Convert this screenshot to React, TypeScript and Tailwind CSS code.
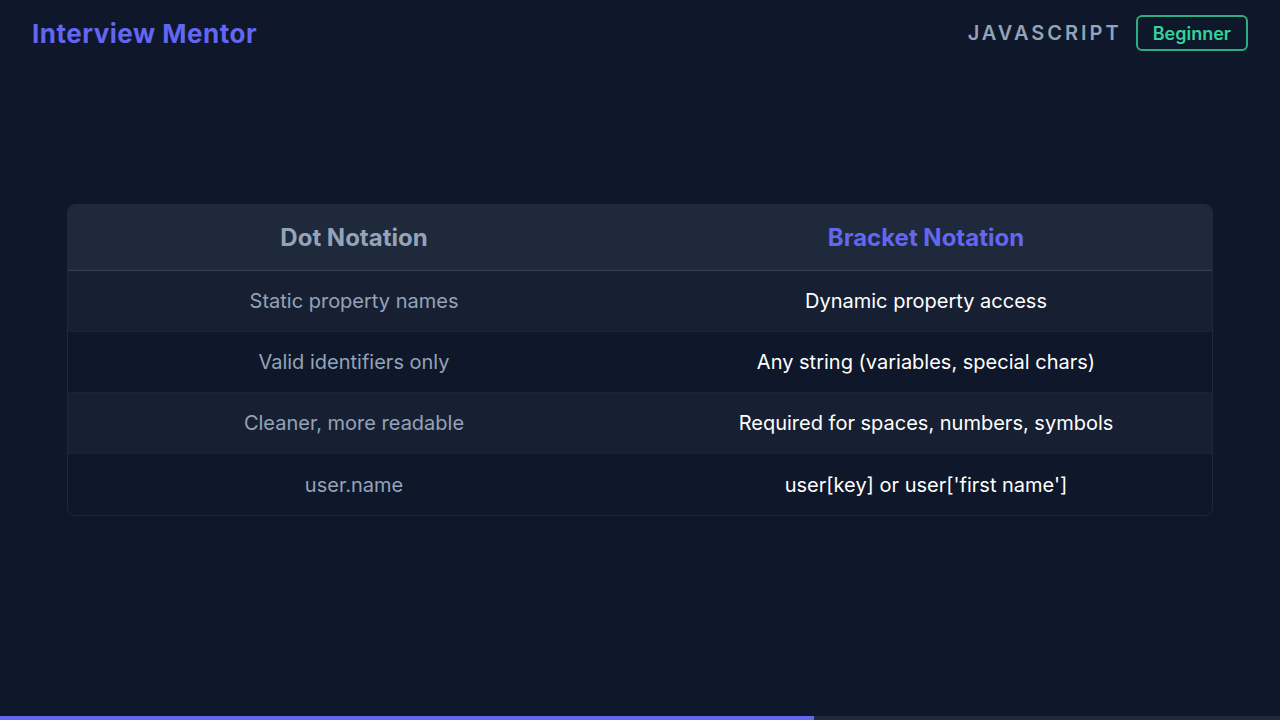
export default function App() {
  const rows = [
    ["Static property names", "Dynamic property access"],
    ["Valid identifiers only", "Any string (variables, special chars)"],
    ["Cleaner, more readable", "Required for spaces, numbers, symbols"],
    ["user.name", "user[key] or user['first name']"],
  ];
  return (
    <div className="w-[1280px] h-[720px] bg-[#0f172a] flex flex-col relative" style={{ fontFamily: "Inter, 'Liberation Sans', sans-serif" }}>
      <div className="flex items-center justify-between px-8 h-[66px]">
        <div className="text-[26px] font-bold text-[#6366f1] tracking-[0.5px]">Interview Mentor</div>
        <div className="flex items-center gap-[14px]">
          <div className="text-[20px] font-semibold tracking-[3px] text-[#94a3b8]">JAVASCRIPT</div>
          <div className="border-2 border-[#34d399]/80 rounded-md px-[15px] h-[36px] flex items-center text-[18px] font-semibold text-[#34d399]">Beginner</div>
        </div>
      </div>
      <div className="flex-1 flex items-start pt-[138px] px-[67px]">
        <div className="w-full rounded-lg border border-[#1e293b] overflow-hidden">
          <div className="grid grid-cols-2 h-[66px] bg-[#1e293b] border-b border-[#334155] items-center text-[24px] font-bold">
            <div className="text-center text-[#94a3b8]">Dot Notation</div>
            <div className="text-center text-[#6366f1]">Bracket Notation</div>
          </div>
          {rows.map((r, i) => (
            <div key={i} className={`grid grid-cols-2 h-[61px] items-center text-[20px] ${i % 2 === 0 ? "bg-[#172033]" : "bg-[#0f172a]"} ${i < 3 ? "border-b border-[#1a2436]" : ""}`}>
              <div className="text-center text-[#94a3b8]">{r[0]}</div>
              <div className="text-center text-white">{r[1]}</div>
            </div>
          ))}
        </div>
      </div>
      <div className="h-[4px] bg-[#1e293b] w-full">
        <div className="h-full bg-[#6366f1] w-[814px]" />
      </div>
    </div>
  );
}
